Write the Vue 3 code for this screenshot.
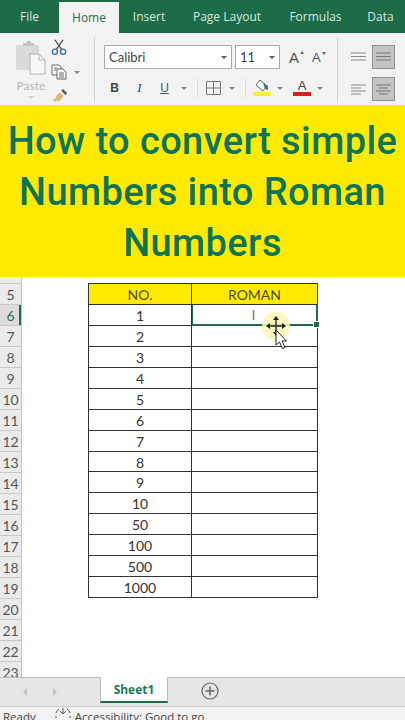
<template>
  <div class="window">
    <nav class="tabs">
      <span v-for="tab in tabs" :key="tab.name" class="tab" :class="{ active: tab.active }" :style="{ width: tab.width + 'px' }">{{ tab.name }}</span>
    </nav>

    <section class="ribbon">
      <div class="group clipboard">
        <div class="paste">
          <svg width="32" height="36" viewBox="0 0 32 36">
            <rect x="1" y="5" width="23" height="25" rx="1" fill="#dadada" />
            <path d="M8 6V3h3l1-2h3l1 2h3v3z" fill="#c2c2c2" />
            <path d="M15 14h9l6 6v14H15z" fill="#f8f8f8" stroke="#b5b5b5" />
            <path d="M24 14v6h6" fill="none" stroke="#b5b5b5" />
          </svg>
          <span class="paste-label">Paste</span>
          <span class="caret faint"></span>
        </div>
        <div class="tools">
          <svg width="16" height="18" viewBox="0 0 16 18" fill="none" stroke="#3f6f9d" stroke-width="1.5">
            <circle cx="3.500" cy="14" r="2.800" />
            <circle cx="12.500" cy="14" r="2.800" />
            <path d="M5 11.500 12.500 1M11 11.500 3.500 1" stroke="#555" />
          </svg>
          <div class="copy-row">
            <svg width="16" height="16" viewBox="0 0 16 16" fill="#fafafa" stroke="#666">
              <path d="M1 1h7l2 2v8H1z" />
              <path d="M6 5h6l3 3v7H6z" />
              <path d="M8 9h5M8 11h5M8 13h5M3 4h3M3 6h2" fill="none" />
            </svg>
            <span class="caret"></span>
          </div>
          <svg width="17" height="15" viewBox="0 0 18 16">
            <path d="M10 4l4 4-4 5-3 2-1-2-2 2-3-2 4-3 1-3z" fill="#dcbb78" />
            <path d="M11 2l2-2 5 5-2 2z" fill="#555" />
          </svg>
        </div>
      </div>

      <div class="group font">
        <div class="font-row">
          <div class="select name">Calibri<span class="caret dark"></span></div>
          <div class="select size">11<span class="caret dark"></span></div>
          <span class="grow">A<i class="up"></i></span>
          <span class="shrink">A<i class="down"></i></span>
        </div>
        <div class="font-row second">
          <b class="fmt">B</b>
          <i class="fmt italic">I</i>
          <u class="fmt">U</u>
          <span class="caret"></span>
          <span class="sep"></span>
          <svg class="borders" width="15" height="14" viewBox="0 0 15 14" fill="none" stroke="#777">
            <path d="M.5.5h14v13H.5zM7.5.5v13M.5 7h14" />
          </svg>
          <span class="caret"></span>
          <span class="sep"></span>
          <div class="swatch fill">
            <svg width="16" height="12" viewBox="0 0 16 12">
              <path d="M6 0l7 6-4 5-7-6z" fill="#fafafa" stroke="#666" />
              <path d="M9 3l5 3v4l-3-1z" fill="#4a6f96" />
            </svg>
            <span class="bar yellow"></span>
          </div>
          <span class="caret"></span>
          <div class="swatch text-color">
            <span class="color-a">A</span>
            <span class="bar red"></span>
          </div>
          <span class="caret"></span>
        </div>
      </div>

      <div class="group align">
        <div class="align-row">
          <svg width="15" height="10" viewBox="0 0 15 10" stroke="#888"><path d="M0 1h15M0 4.500h15M0 8h15" /></svg>
          <span class="pressed"><svg width="15" height="10" viewBox="0 0 15 10" stroke="#777"><path d="M0 1h15M0 4.500h15M0 8h15" /></svg></span>
        </div>
        <div class="align-row">
          <svg width="15" height="11" viewBox="0 0 15 11" stroke="#888"><path d="M0 1h15M0 4h10M0 7h15M0 10h10" /></svg>
          <span class="pressed"><svg width="15" height="11" viewBox="0 0 15 11" stroke="#777"><path d="M0 1h15M3 4h9M0 7h15M3 10h9" /></svg></span>
        </div>
      </div>
    </section>

    <header class="banner">
      <h1>How to convert simple<br />Numbers into Roman<br />Numbers</h1>
    </header>

    <main class="sheet">
      <div class="row-heads">
        <div class="peek"></div>
        <div v-for="n in rowNumbers" :key="n" class="row-head" :class="{ current: n === 6 }">{{ n }}</div>
      </div>

      <div class="table-area">
        <div class="table">
          <div class="cell head">NO.</div>
          <div class="cell head">ROMAN</div>
          <template v-for="(value, i) in numbers" :key="value">
            <div class="cell">{{ value }}</div>
            <div class="cell" :class="{ selected: i === 0 }">
              <template v-if="i === 0">I</template>
            </div>
          </template>
          <div class="pointer">
            <svg width="44" height="44" viewBox="0 0 44 44">
              <circle cx="20" cy="20" r="14" fill="#fbf6b4" opacity=".85" />
              <path d="M20 13v14M13 20h14" stroke="#222" stroke-width="1.300" />
              <path d="M20 10l-3 4h6zM20 30l-3-4h6zM10 20l4-3v6zM30 20l-4-3v6z" fill="#222" />
              <path d="M20 24v15l3.500-3 3 6.500 2.500-1-3-6.500h4.500z" fill="#fff" stroke="#222" />
            </svg>
          </div>
        </div>
      </div>
    </main>

    <div class="sheet-bar">
      <span class="nav-arrow left"></span>
      <span class="nav-arrow right"></span>
      <span class="sheet-tab">Sheet1</span>
      <span class="add">
        <svg width="18" height="18" viewBox="0 0 18 18" fill="none" stroke="#666">
          <circle cx="9" cy="9" r="8" stroke-width="1.200" />
          <path d="M9 4.500v9M4.500 9h9" stroke-width="1.600" />
        </svg>
      </span>
    </div>

    <footer class="status">
      <span class="ready">Ready</span>
      <svg width="18" height="14" viewBox="0 0 18 14" fill="none" stroke="#555">
        <path d="M9 1v6M6 4l3 3 3-3M2 6a7 7 0 0 1 3-4M16 6a7 7 0 0 0-3-4M1 10h2M15 10h2" />
      </svg>
      <span>Accessibility: Good to go</span>
    </footer>
  </div>
</template>

<script setup>
const tabs = [
  { name: 'File', width: 59 },
  { name: 'Home', width: 60, active: true },
  { name: 'Insert', width: 60 },
  { name: 'Page Layout', width: 96 },
  { name: 'Formulas', width: 81 },
  { name: 'Data', width: 49 }
];

const rowNumbers = Array.from({ length: 19 }, (_, i) => i + 5);
const numbers = [1, 2, 3, 4, 5, 6, 7, 8, 9, 10, 50, 100, 500, 1000];
</script>

<style>
html, body {
  margin: 0;
  background: #fff;
}
</style>

<style scoped>
.window {
  width: 405px;
  height: 720px;
  overflow: hidden;
  display: flex;
  flex-direction: column;
  font-family: "Open Sans", "Liberation Sans", sans-serif;
  color: #444;
}

.tabs {
  height: 33px;
  flex: none;
  display: flex;
  background: #1d6b47;
}

.tab {
  flex: none;
  text-align: center;
  color: #d8e8df;
  font-size: 12px;
  line-height: 34px;
}

.tab.active {
  height: 31px;
  margin-top: 2px;
  background: #f3f3f3;
  color: #2f6f50;
  line-height: 31px;
}

.ribbon {
  height: 72px;
  flex: none;
  display: flex;
  background: #f3f3f3;
  overflow: hidden;
}

.group {
  flex: none;
  box-sizing: border-box;
  height: 66px;
  margin-top: 4px;
  border-right: 1px solid #d2d2d2;
}

.clipboard {
  width: 95px;
  display: flex;
  padding-left: 11px;
}

.paste {
  width: 40px;
  padding-top: 3px;
  display: flex;
  flex-direction: column;
  align-items: center;
}

.paste-label {
  color: #b8b8b8;
  font-family: "Lato", sans-serif;
  font-size: 12px;
  line-height: 14px;
  margin-top: 3px;
}

.tools {
  padding-top: 2px;
  display: flex;
  flex-direction: column;
  gap: 9px;
}

.copy-row {
  display: flex;
  align-items: center;
  gap: 7px;
}

.caret {
  display: inline-block;
  width: 0;
  height: 0;
  border-left: 3px solid transparent;
  border-right: 3px solid transparent;
  border-top: 3px solid #888;
}

.caret.dark {
  border-top-color: #555;
}

.caret.faint {
  margin-top: 3px;
  border-top-color: #ccc;
}

.font {
  width: 243px;
  padding: 8px 0 0 9px;
}

.font-row {
  display: flex;
  align-items: center;
  height: 24px;
}

.select {
  box-sizing: border-box;
  height: 24px;
  display: flex;
  align-items: center;
  justify-content: space-between;
  padding: 0 4px;
  background: #fff;
  border: 1px solid #aaa;
  font-family: "Lato", sans-serif;
  font-size: 13px;
  color: #444;
}

.select.name {
  width: 128px;
}

.select.size {
  width: 45px;
  margin-left: 3px;
}

.grow, .shrink {
  position: relative;
  font-family: "Liberation Sans", sans-serif;
  color: #555;
}

.grow {
  margin-left: 9px;
  font-size: 15px;
}

.shrink {
  margin-left: 13px;
  font-size: 13px;
}

.up, .down {
  position: absolute;
  top: 2px;
  right: -5px;
  width: 0;
  height: 0;
  border-left: 2px solid transparent;
  border-right: 2px solid transparent;
}

.up {
  border-bottom: 3px solid #666;
}

.down {
  border-top: 3px solid #666;
}

.second {
  margin-top: 8px;
  height: 22px;
  padding-left: 4px;
}

.fmt {
  width: 13px;
  margin-right: 12px;
  font-family: "Liberation Sans", sans-serif;
  font-size: 12px;
  text-align: center;
  color: #444;
}

.fmt.italic {
  font-family: "Liberation Serif", serif;
  font-size: 13px;
}

.second .fmt:nth-child(3) {
  margin-right: 10px;
  color: #3a5f80;
}

.sep {
  width: 1px;
  height: 20px;
  margin: 0 8px 0 10px;
  background: #ddd;
}

.borders {
  margin-right: 8px;
}

.swatch {
  width: 18px;
  margin-right: 6px;
  display: flex;
  flex-direction: column;
  align-items: center;
}

.swatch.fill {
  margin-left: -1px;
}

.swatch.text-color {
  margin-left: 10px;
}

.color-a {
  font-family: "Liberation Sans", sans-serif;
  font-size: 13px;
  line-height: 12px;
  color: #444;
}

.bar {
  width: 18px;
  height: 4px;
}

.yellow {
  background: #f7ee45;
}

.red {
  background: #d92020;
}

.align {
  border-right: 0;
  flex: 1;
  padding: 8px 0 0 13px;
}

.align-row {
  display: flex;
  align-items: center;
  gap: 6px;
  height: 24px;
  margin-bottom: 8px;
}

.pressed {
  box-sizing: border-box;
  width: 23px;
  height: 24px;
  display: flex;
  align-items: center;
  justify-content: center;
  background: #c4c4c4;
  border: 1px solid #8f8f8f;
}

.banner {
  box-sizing: border-box;
  height: 172px;
  flex: none;
  display: flex;
  align-items: center;
  justify-content: center;
  padding-top: 2px;
  background: #ffea00;
}

.banner h1 {
  margin: 0;
  text-align: center;
  font-family: Roboto, "Liberation Sans", sans-serif;
  font-size: 38px;
  font-weight: 500;
  letter-spacing: .4px;
  line-height: 51px;
  color: #0b7459;
  white-space: nowrap;
}

.sheet {
  flex: 1;
  min-height: 0;
  display: flex;
  overflow: hidden;
}

.row-heads {
  flex: none;
  width: 21px;
  background: #ebebeb;
  border-right: 1px solid #c4c4c4;
}

.peek {
  height: 6px;
  border-bottom: 1px solid #c4c4c4;
}

.row-head {
  box-sizing: border-box;
  height: 21px;
  border-bottom: 1px solid #c8c8c8;
  text-align: center;
  font-family: "Lato", sans-serif;
  font-size: 14px;
  line-height: 21px;
  color: #555;
}

.row-head.current {
  background: #dcdcdc;
  color: #2a7150;
  box-shadow: inset -2px 0 0 #1d6b47;
}

.table-area {
  flex: 1;
  padding: 6px 0 0 66px;
}

.table {
  position: relative;
  width: 230px;
  display: grid;
  grid-template-columns: 103px 126px;
  grid-auto-rows: 20.95px;
  border-top: 1px solid #333;
  border-left: 1px solid #333;
  box-sizing: border-box;
}

.cell {
  box-sizing: border-box;
  border-right: 1px solid #333;
  border-bottom: 1px solid #333;
  text-align: center;
  font-family: "Lato", sans-serif;
  font-size: 14px;
  line-height: 21px;
  color: #333;
}

.head {
  background: #ffea00;
  color: #4d4a10;
}

.selected {
  position: relative;
  color: #777;
  border: 1px solid #1d6b47;
  border-width: 0 2px 2px 1px;
  line-height: 20px;
  padding-right: 2px;
}

.selected::after {
  content: "";
  position: absolute;
  right: -4px;
  bottom: -4px;
  width: 5px;
  height: 5px;
  background: #1d6b47;
  border: 1px solid #fff;
}

.pointer {
  position: absolute;
  left: 167px;
  top: 22px;
  line-height: 0;
}

.sheet-bar {
  box-sizing: border-box;
  height: 29px;
  flex: none;
  display: flex;
  align-items: flex-start;
  background: #e6e6e6;
  border-top: 1px solid #bdbdbd;
}

.nav-arrow {
  width: 0;
  height: 0;
  margin-top: 10px;
  border-top: 4px solid transparent;
  border-bottom: 4px solid transparent;
}

.nav-arrow.left {
  margin-left: 23px;
  border-right: 4px solid #c2c2c2;
}

.nav-arrow.right {
  margin-left: 26px;
  border-left: 4px solid #c2c2c2;
}

.sheet-tab {
  box-sizing: border-box;
  width: 68px;
  height: 26px;
  margin: -1px 0 0 43px;
  background: #fff;
  border-left: 1px solid #bbb;
  border-right: 1px solid #bbb;
  border-bottom: 2px solid #1d6b47;
  text-align: center;
  font-size: 12px;
  font-weight: 700;
  line-height: 25px;
  color: #217a52;
}

.add {
  margin: 4px 0 0 33px;
  line-height: 0;
}

.status {
  box-sizing: border-box;
  height: 14px;
  flex: none;
  display: flex;
  align-items: flex-start;
  gap: 3px;
  padding-left: 3px;
  background: #f2f2f2;
  border-top: 1px solid #cfcfcf;
  font-size: 11.500px;
  line-height: 20px;
  color: #444;
}

.ready {
  margin-right: 15px;
}

.status svg {
  flex: none;
}
</style>
